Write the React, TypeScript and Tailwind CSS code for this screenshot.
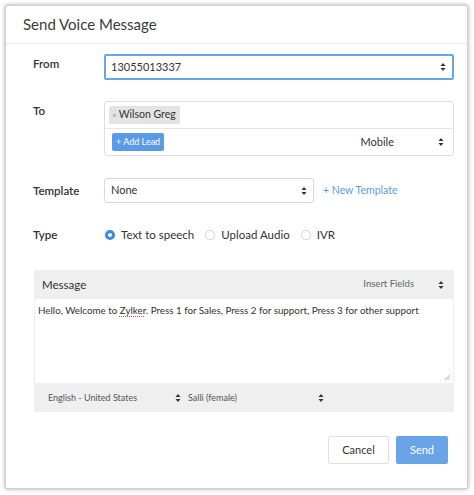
import React from "react";

// tiny up/down caret used on every native-looking select
function Caret({ className = "" }: { className?: string }) {
  return (
    <svg width="6" height="10" viewBox="0 0 6 10" className={className}>
      <path d="M3 1 L5.5 4 H0.5 Z" fill="#333" />
      <path d="M3 9 L5.5 6 H0.5 Z" fill="#333" />
    </svg>
  );
}

function Radio({ checked, label }: { checked?: boolean; label: string }) {
  return (
    <label className="flex items-center gap-[6px]">
      {checked ? (
        <span className="flex h-[10px] w-[10px] items-center justify-center rounded-full bg-[#3b8ae6]">
          <span className="h-[4px] w-[4px] rounded-full bg-white" />
        </span>
      ) : (
        <span className="h-[10px] w-[10px] rounded-full border border-[#d4d4d4] bg-white" />
      )}
      <span>{label}</span>
    </label>
  );
}

export default function App() {
  return (
    <div
      className="h-[495px] w-[474px] bg-white p-[5px] text-[#333]"
      style={{ fontFamily: "Lato, 'Open Sans', sans-serif" }}
    >
      <div className="flex h-[484px] w-[463px] flex-col rounded-[2px] border border-[#cfcfcf] bg-white shadow-[0_0_4px_rgba(0,0,0,0.35)]">
        <div className="flex h-[38px] items-center border-b border-[#e8e8e8] pl-[17px] text-[15px] text-[#3a3a3a]">
          Send Voice Message
        </div>

        <div className="flex flex-col pl-[27px] pr-[13px] pt-[10px] text-[11px]">
          {/* From */}
          <div className="flex">
            <div className="w-[71px] pt-[1px] text-[11.5px] font-semibold">From</div>
            <div className="flex h-[26px] flex-1 items-center justify-between rounded-[2px] border-2 border-[#6aa5e8] pl-[5px] pr-[6px]">
              <span>13055013337</span>
              <Caret />
            </div>
          </div>

          {/* To */}
          <div className="mt-[21px] flex">
            <div className="w-[71px] pt-[1px] text-[11.5px] font-semibold">To</div>
            <div className="flex h-[55px] flex-1 flex-col rounded-[3px] border border-[#dedede]">
              <div className="flex h-[27px] items-center border-b border-[#e6e6e6] pl-[4px]">
                <span className="flex h-[18px] items-center rounded-[2px] bg-[#e4e4e4] pl-[3px] pr-[4px] text-[10.5px]">
                  <span className="mr-[2px] text-[8px] text-[#999]">×</span>Wilson Greg
                </span>
              </div>
              <div className="flex flex-1 items-center pl-[7px] pr-[9px]">
                <span className="flex h-[18px] items-center rounded-[2px] bg-[#5a9be8] px-[4px] text-[9px] text-white">
                  + Add Lead
                </span>
                <span className="ml-auto mr-[44px]">Mobile</span>
                <Caret />
              </div>
            </div>
          </div>

          {/* Template */}
          <div className="mt-[22px] flex items-center">
            <div className="w-[71px] text-[11.5px] font-semibold">Template</div>
            <div className="flex h-[25px] w-[210px] items-center justify-between rounded-[3px] border border-[#d9d9d9] pl-[6px] pr-[6px]">
              <span>None</span>
              <Caret />
            </div>
            <span className="ml-[9px] text-[10.5px] text-[#5d9be0]">+ New Template</span>
          </div>

          {/* Type */}
          <div className="mt-[24px] flex h-[16px] items-center">
            <div className="w-[72px] text-[11.5px] font-semibold">Type</div>
            <div className="flex items-center gap-[11px] text-[11.5px]">
              <Radio checked label="Text to speech" />
              <Radio label="Upload Audio" />
              <Radio label="IVR" />
            </div>
          </div>

          {/* Message */}
          <div className="ml-[1px] mt-[27px] flex h-[142px] flex-col bg-[#efefef]">
            <div className="flex h-[29px] items-center pl-[8px] pr-[10px]">
              <span className="text-[11.5px]">Message</span>
              <span className="ml-auto mr-[24px] text-[9.5px] text-[#666]">Insert Fields</span>
              <Caret />
            </div>
            <div className="relative mx-[1px] h-[84px] bg-white pl-[3px] pt-[4px] text-[9.8px]">
              Hello, Welcome to{" "}
              <span className="underline decoration-[#e05050] decoration-dotted underline-offset-2">Zylker</span>. Press 1
              for Sales, Press 2 for support, Press 3 for other support
              <svg width="6" height="6" viewBox="0 0 6 6" className="absolute bottom-[3px] right-[3px]">
                <path d="M1 6 L6 1 M3.5 6 L6 3.5" stroke="#999" strokeWidth="0.8" />
              </svg>
            </div>
            <div className="flex flex-1 items-center pl-[14px] text-[9px] text-[#555]">
              <span className="w-[127px]">English - United States</span>
              <Caret className="mr-[7px]" />
              <span className="w-[130px]">Salli (female)</span>
              <Caret />
            </div>
          </div>

          {/* Buttons */}
          <div className="mt-[24px] flex justify-end gap-[7px] pr-[6px]">
            <button className="h-[28px] w-[61px] rounded-[2px] border border-[#e0e0e0] bg-white text-[11px]">
              Cancel
            </button>
            <button className="h-[28px] w-[52px] rounded-[2px] bg-[#6aa4e8] text-[11px] text-white">
              Send
            </button>
          </div>
        </div>
      </div>
    </div>
  );
}
